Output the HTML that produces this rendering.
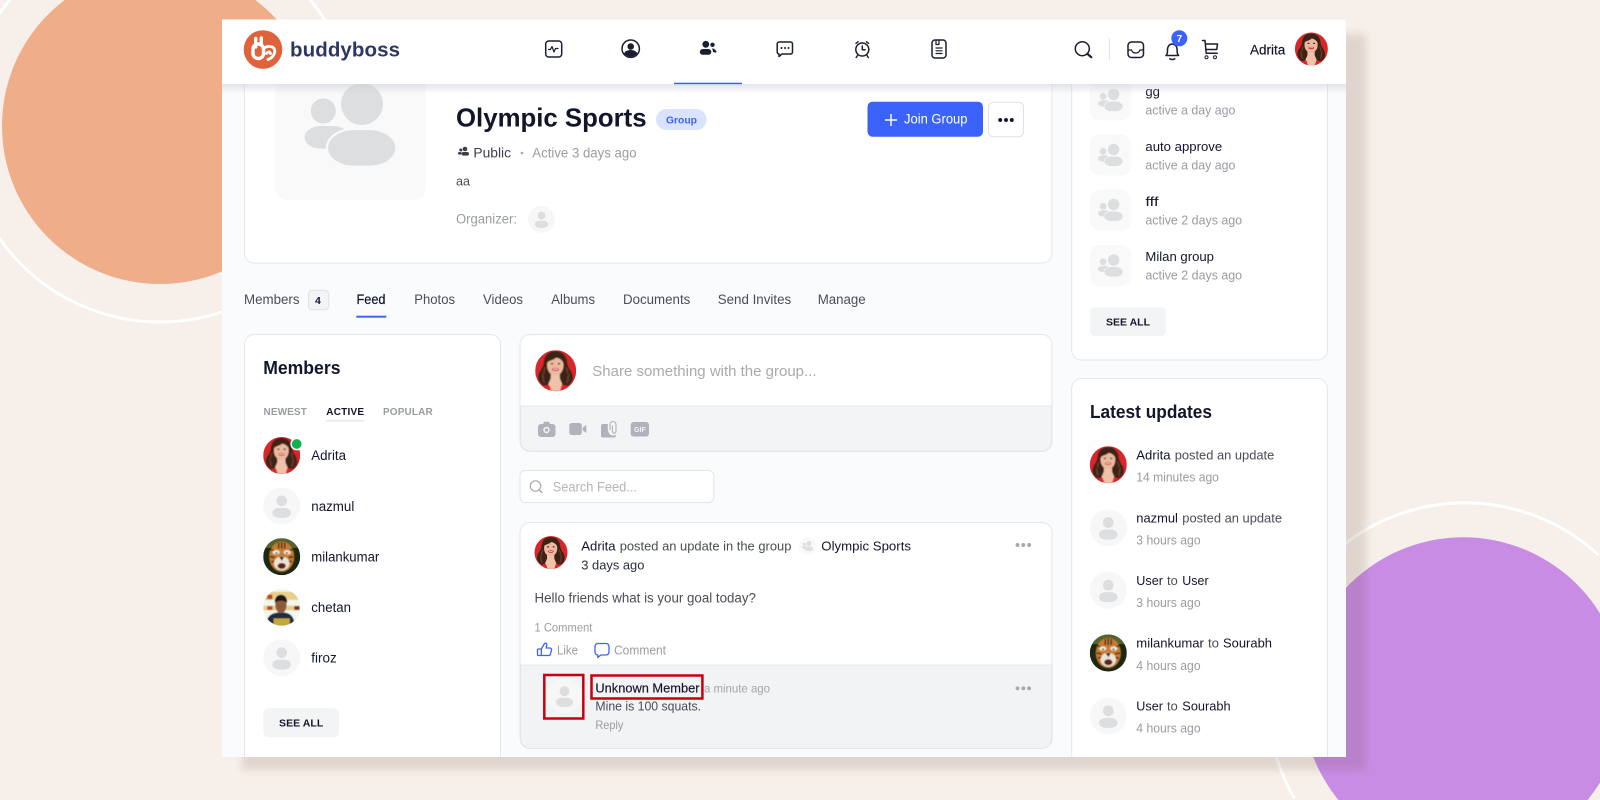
<!DOCTYPE html>
<html lang="en"><head><meta charset="utf-8"><title>Olympic Sports</title>
<style>
html,body{margin:0;padding:0;width:1600px;height:800px;overflow:hidden;background:#f7efe9}
svg{display:block;font-family:"Liberation Sans",Arial,sans-serif}
text{font-size:13.5px;fill:#12162b}
.g{fill:#9a9ca3}.d{fill:#4a4d55}.b{font-weight:700}
</style></head><body>
<svg xmlns="http://www.w3.org/2000/svg" width="1600" height="800" viewBox="0 0 1600 800">
<defs>
<clipPath id="pg"><rect x="222" y="19.5" width="1124" height="737.5"/></clipPath>
<clipPath id="cc"><circle cx="50" cy="50" r="50"/></clipPath>
<filter id="bl" x="-10%" y="-10%" width="120%" height="120%"><feGaussianBlur stdDeviation="4"/></filter>
<filter id="av" x="-5%" y="-5%" width="110%" height="110%"><feGaussianBlur stdDeviation="1.2"/></filter>
<linearGradient id="hs" x1="0" y1="0" x2="0" y2="1"><stop offset="0" stop-color="#c9ccd6" stop-opacity=".5"/><stop offset="1" stop-color="#c9ccd6" stop-opacity="0"/></linearGradient>
<symbol id="ph" viewBox="0 0 100 100"><circle cx="50" cy="50" r="50" fill="#f7f7f8"/><circle cx="50" cy="36" r="14.5" fill="#dcdee0"/><rect x="25" y="55" width="50" height="27" rx="18" ry="13.5" fill="#dcdee0"/></symbol>
<symbol id="gi" viewBox="0 0 100 100"><circle cx="57.6" cy="36.4" r="13.9" fill="#dcdee0"/><circle cx="32" cy="41" r="8.3" fill="#dcdee0"/><rect x="19.5" y="51" width="30" height="15" rx="11" ry="7.5" fill="#dcdee0"/><rect x="34.4" y="53" width="46" height="25" rx="18" ry="12.5" fill="#dcdee0" stroke="#f9f9fa" stroke-width="1.5"/></symbol>
<symbol id="wo" viewBox="0 0 100 100"><g clip-path="url(#cc)"><rect width="100" height="100" fill="#d8262b"/><g filter="url(#av)">
<path d="M49 3C30 3 22 16 21 32C20 44 10 50 8 62C6 74 14 86 30 90L70 90C86 86 94 74 91 62C89 50 79 44 78 32C77 16 68 3 49 3z" fill="#3d2118"/>
<path d="M17 58c5 7 0 14 6 22M83 58c-5 7 0 14-6 22M25 42c-3 6-5 10-3 15M75 42c3 6 5 10 3 15" fill="none" stroke="#6f3f2a" stroke-width="3.5"/>
<path d="M38 54H60V68C62 76 68 82 70 100H28C30 82 36 76 38 68z" fill="#eec3aa"/>
<ellipse cx="49" cy="37" rx="20" ry="25" fill="#ecb99d"/>
<path d="M29 30C31 15 44 9 55 11C64 14 70 22 70 32C65 23 58 19 51 18C45 24 36 24 29 30z" fill="#3d2118"/>
<ellipse cx="41" cy="33" rx="3.200" ry="1.800" fill="#33201a"/><ellipse cx="58" cy="33" rx="3.200" ry="1.800" fill="#33201a"/>
<ellipse cx="49.500" cy="47" rx="8.500" ry="3.600" fill="#c8202e"/><rect x="44" y="45.500" width="11" height="2" fill="#fff"/>
<path d="M18 88L34 84L40 100H16zM82 88L65 84L60 100H84z" fill="#d8262b"/></g></g></symbol>
<symbol id="ti" viewBox="0 0 100 100"><g clip-path="url(#cc)"><rect width="100" height="100" fill="#1b2812"/><path d="M0 0h100v26H0z" fill="#56632a"/><g filter="url(#av)">
<ellipse cx="50" cy="50" rx="34" ry="41" fill="#c87a30"/>
<path d="M20 30l14 6M80 30l-14 6M42 12v16M50 10v18M58 12v16M18 50l13 2M82 50l-13 2M22 64l10-2M78 64l-10-2" stroke="#2a1a10" stroke-width="3.500"/>
<ellipse cx="35" cy="38" rx="10" ry="6" fill="#f0e6d2"/><ellipse cx="65" cy="38" rx="10" ry="6" fill="#f0e6d2"/>
<circle cx="36" cy="40" r="2.500" fill="#2a1a10"/><circle cx="64" cy="40" r="2.500" fill="#2a1a10"/>
<ellipse cx="50" cy="68" rx="21" ry="19" fill="#ebe2d2"/><path d="M43 50h14l-7 11z" fill="#33201a"/><ellipse cx="50" cy="75" rx="11" ry="8" fill="#5a241e"/></g></g></symbol>
<symbol id="ch" viewBox="0 0 100 100"><g clip-path="url(#cc)"><rect width="100" height="100" fill="#f1f6ee"/><g filter="url(#av)"><rect y="8" width="100" height="22" fill="#e9cf8e"/><rect y="46" width="100" height="12" fill="#e8cb88"/><rect x="11" y="16" width="14" height="12" fill="#b5472c"/><rect x="11" y="47" width="14" height="10" fill="#b5472c"/><rect x="84" y="47" width="14" height="10" fill="#7b2c1c"/>
<path d="M8 100c0-24 14-36 40-36s36 12 36 36z" fill="#232b3d"/><rect x="28" y="80" width="44" height="20" fill="#c4a73e"/><ellipse cx="48" cy="44" rx="15" ry="22" fill="#8a5b3e"/><path d="M32 38c-2-16 8-22 16-22s18 6 16 22c-5-7-26-8-32 0z" fill="#1b1614"/></g></g></symbol>
<symbol id="dots" viewBox="0 0 18 5"><circle cx="2.5" cy="2.5" r="2.2"/><circle cx="9" cy="2.5" r="2.2"/><circle cx="15.5" cy="2.5" r="2.2"/></symbol>
</defs>

<rect width="1600" height="800" fill="#f7efe9"/>
<circle cx="160" cy="126" r="158" fill="#f0ad8a"/>
<circle cx="160" cy="126" r="196" fill="none" stroke="#fff" stroke-width="3"/>
<path d="M1338.4 800A161 161 0 1 1 1600 613.4V782.6A161 161 0 0 1 1587.6 800Z" fill="#c98ce4"/>
<path d="M1294.500 798.500A197 197 0 0 1 1598.500 555" fill="none" stroke="#fff" stroke-width="3"/>
<rect x="242" y="34" width="1124" height="736" fill="#5a4030" opacity=".14" filter="url(#bl)"/>

<g clip-path="url(#pg)">
<rect x="222" y="19" width="1124" height="738" fill="#fafbfd"/>

<!-- Hero card -->
<rect x="244.5" y="40" width="807.5" height="223" rx="10" fill="#fff" stroke="#e4e6ea"/>
<rect x="275" y="49" width="151" height="151" rx="12" fill="#f9f9fa"/>
<use href="#gi" x="275" y="49" width="151" height="151"/>
<text x="456" y="126.7" class="b" style="font-size:26px" textLength="190.6" lengthAdjust="spacingAndGlyphs">Olympic Sports</text>
<rect x="656" y="109" width="50.6" height="21" rx="10.5" fill="#dae3fd"/>
<text x="666" y="123.3" class="b" style="font-size:10.5px;fill:#3e63ee" textLength="31" lengthAdjust="spacingAndGlyphs">Group</text>
<g fill="#3c3f4a"><circle cx="465" cy="149" r="2.3"/><circle cx="460.8" cy="150" r="1.5"/><rect x="461.5" y="152" width="7.5" height="3.6" rx="1.8"/><rect x="458" y="152" width="3.5" height="2.6" rx="1.3"/></g>
<text x="473.4" y="157.3" style="fill:#3c3f4a" textLength="37.6" lengthAdjust="spacingAndGlyphs">Public</text>
<circle cx="522" cy="153" r="1.3" fill="#a5a7ad"/>
<text x="532.3" y="157.3" class="g" textLength="104.3" lengthAdjust="spacingAndGlyphs">Active 3 days ago</text>
<text x="456" y="185.7" class="d" style="font-size:13px" textLength="14" lengthAdjust="spacingAndGlyphs">aa</text>
<text x="456" y="223.3" class="g" textLength="61" lengthAdjust="spacingAndGlyphs">Organizer:</text>
<use href="#ph" x="528" y="205.8" width="27" height="27"/>
<rect x="867.5" y="101.7" width="115.5" height="35" rx="5" fill="#3b62fa"/>
<path d="M891 114v12M885 120h12" stroke="#fff" stroke-width="1.4"/>
<text x="904" y="123.6" style="fill:#fff" textLength="63.5" lengthAdjust="spacingAndGlyphs">Join Group</text>
<rect x="988.5" y="102.2" width="35" height="34.5" rx="5" fill="#fff" stroke="#dfe1e5"/>
<use href="#dots" x="998" y="117.5" width="16" height="5" fill="#12162b"/>

<!-- Tabs -->
<text x="244" y="304" class="d" textLength="55.5" lengthAdjust="spacingAndGlyphs">Members</text>
<rect x="308.5" y="290.3" width="20.3" height="19.5" rx="4" fill="#f2f4f6" stroke="#dfe1e5"/>
<text x="315" y="304" class="b" style="font-size:10.5px">4</text>
<text x="356.5" y="304" textLength="29" lengthAdjust="spacingAndGlyphs" style="stroke:#12162b;stroke-width:.2">Feed</text>
<rect x="356.3" y="315.7" width="30" height="2" fill="#3b62fa"/>
<text x="414.3" y="304" class="d" textLength="40.7" lengthAdjust="spacingAndGlyphs">Photos</text>
<text x="483" y="304" class="d" textLength="40" lengthAdjust="spacingAndGlyphs">Videos</text>
<text x="551.3" y="304" class="d" textLength="43.7" lengthAdjust="spacingAndGlyphs">Albums</text>
<text x="623" y="304" class="d" textLength="67.3" lengthAdjust="spacingAndGlyphs">Documents</text>
<text x="717.7" y="304" class="d" textLength="73.5" lengthAdjust="spacingAndGlyphs">Send Invites</text>
<text x="817.7" y="304" class="d" textLength="48" lengthAdjust="spacingAndGlyphs">Manage</text>

<!-- Members card -->
<rect x="244.5" y="334.5" width="256" height="440" rx="10" fill="#fff" stroke="#e4e6ea"/>
<text x="263.2" y="374" class="b" style="font-size:18px" textLength="77.3" lengthAdjust="spacingAndGlyphs">Members</text>
<text x="263.5" y="415" class="b" style="font-size:10px;fill:#9a9ca3" textLength="43.3" lengthAdjust="spacing">NEWEST</text>
<text x="326.3" y="415" class="b" style="font-size:10px" textLength="37.7" lengthAdjust="spacing">ACTIVE</text>
<text x="383" y="415" class="b" style="font-size:10px;fill:#9a9ca3" textLength="49.7" lengthAdjust="spacing">POPULAR</text>
<rect x="326.3" y="420" width="37.7" height="1.5" fill="#e6e7ea"/>
<use href="#wo" x="263.2" y="437" width="37" height="37"/>
<circle cx="296.7" cy="444" r="5.6" fill="#12b04f" stroke="#fff" stroke-width="1.5"/>
<text x="311.3" y="460.2" textLength="34.7" lengthAdjust="spacingAndGlyphs">Adrita</text>
<use href="#ph" x="263.2" y="487.5" width="37" height="37"/>
<text x="311.3" y="511" textLength="43" lengthAdjust="spacingAndGlyphs">nazmul</text>
<use href="#ti" x="263.2" y="538.2" width="37" height="37"/>
<text x="311.3" y="561.5" textLength="68" lengthAdjust="spacingAndGlyphs">milankumar</text>
<use href="#ch" x="263.2" y="588.8" width="37" height="37"/>
<text x="311.3" y="611.8" textLength="39.7" lengthAdjust="spacingAndGlyphs">chetan</text>
<use href="#ph" x="263.2" y="639.3" width="37" height="37"/>
<text x="311.3" y="662.3" textLength="25.4" lengthAdjust="spacingAndGlyphs">firoz</text>
<rect x="263.3" y="708.3" width="75.7" height="29" rx="5" fill="#f2f4f6"/>
<text x="279" y="726.7" class="b" style="font-size:10.5px" textLength="44.3" lengthAdjust="spacing">SEE ALL</text>

<!-- Composer -->
<rect x="520" y="334.5" width="532" height="117" rx="10" fill="#fff" stroke="#e4e6ea"/>
<path d="M520.5 406H1051.5V441a10 10 0 0 1-10 10H530.5a10 10 0 0 1-10-10z" fill="#f2f4f6" stroke="#e6e8ec"/>
<use href="#wo" x="535.2" y="350.2" width="41" height="41"/>
<text x="592.3" y="376" style="font-size:15px;fill:#a8aab0" textLength="224.2" lengthAdjust="spacingAndGlyphs">Share something with the group...</text>
<g fill="#b0b3b9">
<path d="M541 424h2l1-2.300h5l1 2.300h2.500a3 3 0 0 1 3 3v7a3 3 0 0 1-3 3H541a3 3 0 0 1-3-3v-7a3 3 0 0 1 3-3z"/>
<rect x="569.300" y="423" width="12.500" height="12" rx="2.500"/><path d="M582.800 427.500l3.500-2.500v8l-3.500-2.500z"/>
<path d="M603 424h5c-.5 3-.5 8 2 10.500 2 1.500 4 1 6 .5v.5a2 2 0 0 1-2 2h-11a2 2 0 0 1-2-2v-9.500a2 2 0 0 1 2-2z"/>
<rect x="630.700" y="422" width="18.300" height="14.500" rx="3"/></g>
<circle cx="546.500" cy="430" r="2.500" fill="none" stroke="#f2f4f6" stroke-width="1.500"/>
<path d="M610 430v-5.500a3 3 0 0 1 6 0v7a1.800 1.800 0 0 1-3.600 0v-6" fill="none" stroke="#b0b3b9" stroke-width="1.100"/>
<text x="634" y="432" class="b" style="font-size:7px;fill:#f2f4f6" textLength="11.800" lengthAdjust="spacing">GIF</text>

<!-- Search -->
<rect x="520" y="470.500" width="193.800" height="32" rx="5" fill="#fff" stroke="#e3e5e9"/>
<circle cx="535.500" cy="486" r="5.200" fill="none" stroke="#a6a8ae" stroke-width="1.200"/><path d="M539.300 490l3 3" stroke="#a6a8ae" stroke-width="1.300"/>
<text x="552.700" y="491.500" style="fill:#b4b6bb" textLength="84.300" lengthAdjust="spacingAndGlyphs">Search Feed...</text>

<!-- Post -->
<rect x="520" y="522.500" width="532" height="226" rx="10" fill="#fff" stroke="#e4e6ea"/>
<use href="#wo" x="534.500" y="536" width="33" height="33"/>
<text x="581.300" y="550.700" style="font-size:13px" textLength="34.300" lengthAdjust="spacingAndGlyphs">Adrita</text>
<text x="619.700" y="550.700" class="d" style="font-size:13px" textLength="171.700" lengthAdjust="spacingAndGlyphs">posted an update in the group</text>
<circle cx="807.600" cy="546" r="9" fill="#f9f9fa"/><use href="#gi" x="798.600" y="537" width="18" height="18"/>
<text x="821.300" y="550.700" style="font-size:13px" textLength="89.700" lengthAdjust="spacingAndGlyphs">Olympic Sports</text>
<use href="#dots" x="1015.300" y="542.500" width="16" height="5" fill="#a7a9ae"/>
<text x="581.300" y="569.300" style="font-size:13px;fill:#2b2e3a" textLength="63.100" lengthAdjust="spacingAndGlyphs">3 days ago</text>
<text x="534.500" y="602.700" class="d" textLength="221.400" lengthAdjust="spacingAndGlyphs">Hello friends what is your goal today?</text>
<text x="534.500" y="631.300" class="g" style="font-size:11.500px" textLength="57.900" lengthAdjust="spacingAndGlyphs">1 Comment</text>
<path d="M541.300 649v6.500h-3.300a.6 .6 0 0 1-.5-.6v-5.400a.6 .6 0 0 1 .5-.5zM541.300 649l3.200-5.600c1.600-.8 2.600.4 2.300 1.800l-.6 2.800h3.700c1.200 0 1.900 1 1.600 2l-1.200 4.400c-.2.800-.9 1.100-1.600 1.100h-7.400" fill="none" stroke="#3b62fa" stroke-width="1.300" stroke-linejoin="round"/>
<text x="557" y="654.700" class="g" style="font-size:12.500px" textLength="21" lengthAdjust="spacingAndGlyphs">Like</text>
<path d="M597 643.500h9a3 3 0 0 1 3 3v5.500a3 3 0 0 1-3 3h-5.200l-3 2.500v-2.500a3 3 0 0 1-2.800-3v-5.500a3 3 0 0 1 3-3z" fill="none" stroke="#3b62fa" stroke-width="1.300" stroke-linejoin="round"/>
<text x="614" y="654.700" class="g" style="font-size:12.500px" textLength="52" lengthAdjust="spacingAndGlyphs">Comment</text>
<path d="M520.500 665H1051.500V738.500a10 10 0 0 1-10 10H530.500a10 10 0 0 1-10-10z" fill="#f1f3f5"/>
<path d="M520.500 665H1051.500" stroke="#e8eaed"/>
<path d="M520.500 665V738.500a10 10 0 0 0 10 10H1041.500a10 10 0 0 0 10-10V665" fill="none" stroke="#e4e6ea"/>
<use href="#ph" x="547.500" y="679" width="34" height="34"/>
<rect x="544.300" y="675" width="39" height="43.500" fill="none" stroke="#c5000f" stroke-width="2.500"/>
<text x="595.400" y="692.700" style="font-size:12.500px;stroke:#12162b;stroke-width:.15" textLength="104.100" lengthAdjust="spacingAndGlyphs">Unknown Member</text>
<rect x="591.500" y="675.500" width="110.900" height="23" fill="none" stroke="#c5000f" stroke-width="2.500"/>
<text x="704" y="692.700" style="font-size:12px;fill:#a3a5ab" textLength="66" lengthAdjust="spacingAndGlyphs">a minute ago</text>
<text x="595.400" y="710.700" class="d" style="font-size:12.500px" textLength="105.700" lengthAdjust="spacingAndGlyphs">Mine is 100 squats.</text>
<text x="595.400" y="729" class="g" style="font-size:12px" textLength="28" lengthAdjust="spacingAndGlyphs">Reply</text>
<use href="#dots" x="1015.300" y="685.800" width="16" height="5" fill="#a7a9ae"/>

<!-- Right: groups -->
<rect x="1071.700" y="40" width="255.800" height="320" rx="10" fill="#fff" stroke="#e4e6ea"/>
<g>
<rect x="1090" y="79.500" width="41" height="41" rx="10" fill="#f9f9fa"/><use href="#gi" x="1090" y="79.500" width="41" height="41"/>
<rect x="1090" y="134.500" width="41" height="41" rx="10" fill="#f9f9fa"/><use href="#gi" x="1090" y="134.500" width="41" height="41"/>
<rect x="1090" y="189.500" width="41" height="41" rx="10" fill="#f9f9fa"/><use href="#gi" x="1090" y="189.500" width="41" height="41"/>
<rect x="1090" y="245" width="41" height="41" rx="10" fill="#f9f9fa"/><use href="#gi" x="1090" y="245" width="41" height="41"/>
</g>
<text x="1145.400" y="96" style="font-size:13px" textLength="14.600" lengthAdjust="spacingAndGlyphs">gg</text>
<text x="1145.400" y="114.300" class="g" style="font-size:13px" textLength="90" lengthAdjust="spacingAndGlyphs">active a day ago</text>
<text x="1145.400" y="151" style="font-size:13px" textLength="76.800" lengthAdjust="spacingAndGlyphs">auto approve</text>
<text x="1145.400" y="169.300" class="g" style="font-size:13px" textLength="90" lengthAdjust="spacingAndGlyphs">active a day ago</text>
<text x="1145.400" y="206" style="font-size:13px" textLength="13.200" lengthAdjust="spacingAndGlyphs">fff</text>
<text x="1145.400" y="224.300" class="g" style="font-size:13px" textLength="96.700" lengthAdjust="spacingAndGlyphs">active 2 days ago</text>
<text x="1145.400" y="261" style="font-size:13px" textLength="68.600" lengthAdjust="spacingAndGlyphs">Milan group</text>
<text x="1145.400" y="279.300" class="g" style="font-size:13px" textLength="96.700" lengthAdjust="spacingAndGlyphs">active 2 days ago</text>
<rect x="1090" y="307" width="76" height="29" rx="5" fill="#f2f4f6"/>
<text x="1106" y="325.500" class="b" style="font-size:10.500px" textLength="44" lengthAdjust="spacing">SEE ALL</text>

<!-- Latest updates -->
<rect x="1071.700" y="378.500" width="255.800" height="400" rx="10" fill="#fff" stroke="#e4e6ea"/>
<text x="1090" y="418" class="b" style="font-size:18px" textLength="122" lengthAdjust="spacingAndGlyphs">Latest updates</text>
<use href="#wo" x="1089.800" y="446.200" width="37" height="37"/>
<text x="1136.300" y="459.300" style="font-size:13px" textLength="34.300" lengthAdjust="spacingAndGlyphs">Adrita</text>
<text x="1174.700" y="459.300" class="d" style="font-size:13px" textLength="99.600" lengthAdjust="spacingAndGlyphs">posted an update</text>
<text x="1136.300" y="481.700" class="g" style="font-size:13px" textLength="82.600" lengthAdjust="spacingAndGlyphs">14 minutes ago</text>
<use href="#ph" x="1089.800" y="509.200" width="37" height="37"/>
<text x="1136.300" y="522.300" style="font-size:13px" textLength="41.600" lengthAdjust="spacingAndGlyphs">nazmul</text>
<text x="1182.300" y="522.300" class="d" style="font-size:13px" textLength="99.700" lengthAdjust="spacingAndGlyphs">posted an update</text>
<text x="1136.300" y="544.300" class="g" style="font-size:13px" textLength="64.300" lengthAdjust="spacingAndGlyphs">3 hours ago</text>
<use href="#ph" x="1089.800" y="571.800" width="37" height="37"/>
<text x="1136.300" y="585" style="font-size:13px" textLength="26.600" lengthAdjust="spacingAndGlyphs">User</text>
<text x="1167" y="585" class="d" style="font-size:13px" textLength="10.700" lengthAdjust="spacingAndGlyphs">to</text>
<text x="1182.300" y="585" style="font-size:13px" textLength="26.300" lengthAdjust="spacingAndGlyphs">User</text>
<text x="1136.300" y="607" class="g" style="font-size:13px" textLength="64.300" lengthAdjust="spacingAndGlyphs">3 hours ago</text>
<use href="#ti" x="1089.800" y="634.500" width="37" height="37"/>
<text x="1136.300" y="647.700" style="font-size:13px" textLength="67.600" lengthAdjust="spacingAndGlyphs">milankumar</text>
<text x="1208" y="647.700" class="d" style="font-size:13px" textLength="11" lengthAdjust="spacingAndGlyphs">to</text>
<text x="1223" y="647.700" style="font-size:13px" textLength="49" lengthAdjust="spacingAndGlyphs">Sourabh</text>
<text x="1136.300" y="670" class="g" style="font-size:13px" textLength="64.300" lengthAdjust="spacingAndGlyphs">4 hours ago</text>
<use href="#ph" x="1089.800" y="697.500" width="37" height="37"/>
<text x="1136.300" y="710.300" style="font-size:13px" textLength="26.600" lengthAdjust="spacingAndGlyphs">User</text>
<text x="1167" y="710.300" class="d" style="font-size:13px" textLength="10.700" lengthAdjust="spacingAndGlyphs">to</text>
<text x="1182.300" y="710.300" style="font-size:13px" textLength="48.300" lengthAdjust="spacingAndGlyphs">Sourabh</text>
<text x="1136.300" y="732.700" class="g" style="font-size:13px" textLength="64.300" lengthAdjust="spacingAndGlyphs">4 hours ago</text>

<!-- Header -->
<rect x="222" y="84" width="1124" height="10" fill="url(#hs)"/>
<rect x="222" y="19" width="1124" height="65" fill="#fff"/>
<circle cx="263" cy="49.500" r="19.300" fill="#e0623a"/>
<path d="M255.700 38.500v8.500M261.300 38v7M253 49c0-3 2.500-5 5-5 3 0 5.500 2 5.500 5v4.500c0 3-2.500 5-5 5-3 0-5.500-2-5.500-5z" fill="none" stroke="#fff" stroke-width="3.400" stroke-linecap="round"/>
<path d="M264 48.500c3-3 9-3 10.500 1 1.200 4-2 8.500-6.500 10M266.500 53.500c1.500-2 3.500-2 4 0" fill="none" stroke="#fff" stroke-width="2.800" stroke-linecap="round"/>
<path d="M258.500 48.500v6" stroke="#e0623a" stroke-width="1.500"/>
<text x="290" y="56.700" class="b" style="font-size:20.500px;fill:#2c3765" textLength="110" lengthAdjust="spacing">buddyboss</text>

<g fill="none" stroke="#1a1e30" stroke-width="1.500" stroke-linecap="round" stroke-linejoin="round">
<rect x="545.700" y="41" width="16" height="16" rx="3"/>
<path d="M548.500 49.500h2l1.500-3 2 5.500 1.500-3.500h2.500" stroke-width="1.200"/>
<circle cx="630.700" cy="48.700" r="8.700"/>
<path d="M779.500 42h11a2 2 0 0 1 2 2v8a2 2 0 0 1-2 2h-8.500l-3 2.500v-2.500a2 2 0 0 1-1.800-2v-8a2 2 0 0 1 2-2z"/>
<circle cx="862.300" cy="49.500" r="6.500"/><path d="M862.300 46v3.800h2.800M856 43.300l2-1.500M868.500 43.300l-2-1.500M857.500 55.500l-1.300 2M867 55.500l1.300 2"/>
<path d="M935 40h8a3 3 0 0 1 3 3v12a3 3 0 0 1-3 3h-8a3 3 0 0 1-3-3v-12a3 3 0 0 1 3-3z"/><path d="M936 40v4.500h3V40M936 48h6M936 50.800h6M936 53.500h6" stroke-width="1.200"/>
<circle cx="1082.300" cy="48.700" r="7"/><path d="M1087.300 53.800l4 3.400" stroke-width="2.200"/>
<rect x="1128" y="42" width="15.500" height="15.500" rx="3.500"/><path d="M1128 50h3.500q1 3 4.200 3t4.300-3h3.500" stroke-width="1.200"/>
<path d="M1166 55.500c1.500-1.500 1.500-3 1.500-6 0-3 2-5.500 4.800-5.500s4.800 2.500 4.800 5.500c0 3 0 4.500 1.500 6zM1169.800 58.800q2.500 1.500 5 0"/>
<path d="M1202.500 40.500h2.500l1.200 12.800h11M1205.500 44h12l-.8 5.500h-10.700"/>
</g>
<g fill="#1a1e30">
<circle cx="630.700" cy="46.500" r="3.300"/><path d="M624 53.500c1-2.500 4-3.500 6.700-3.500s5.700 1 6.700 3.500a8.700 8.700 0 0 1-13.400 0z"/>
<circle cx="705.800" cy="44.300" r="3.400"/><rect x="699.800" y="49" width="11.500" height="5.800" rx="2.900"/><circle cx="712.500" cy="44.800" r="2.200"/><path d="M712 48.500c2 0 3 .8 4.500 2.800l-.5 1.500-3-.8c0-1.500-.5-2.500-1-3.500z"/>
<circle cx="781.500" cy="48" r="1"/><circle cx="785" cy="48" r="1"/><circle cx="788.500" cy="48" r="1"/>
<circle cx="1206.500" cy="57.300" r="1.500" fill="none" stroke="#1a1e30"/><circle cx="1215" cy="57.300" r="1.500" fill="none" stroke="#1a1e30"/>
</g>
<rect x="1108.800" y="38.300" width="1.200" height="22" fill="#e3e5e9"/>
<rect x="674" y="82.700" width="68" height="1.500" fill="#3b62fa"/>
<circle cx="1179.300" cy="38.300" r="8" fill="#3b62fa"/>
<text x="1176.600" y="41.800" class="b" style="font-size:10px;fill:#fff">7</text>
<text x="1250" y="54.300" style="stroke:#12162b;stroke-width:.15" textLength="35.300" lengthAdjust="spacingAndGlyphs">Adrita</text>
<use href="#wo" x="1294.900" y="32.500" width="33" height="33"/>
</g>
</svg>
</body></html>
